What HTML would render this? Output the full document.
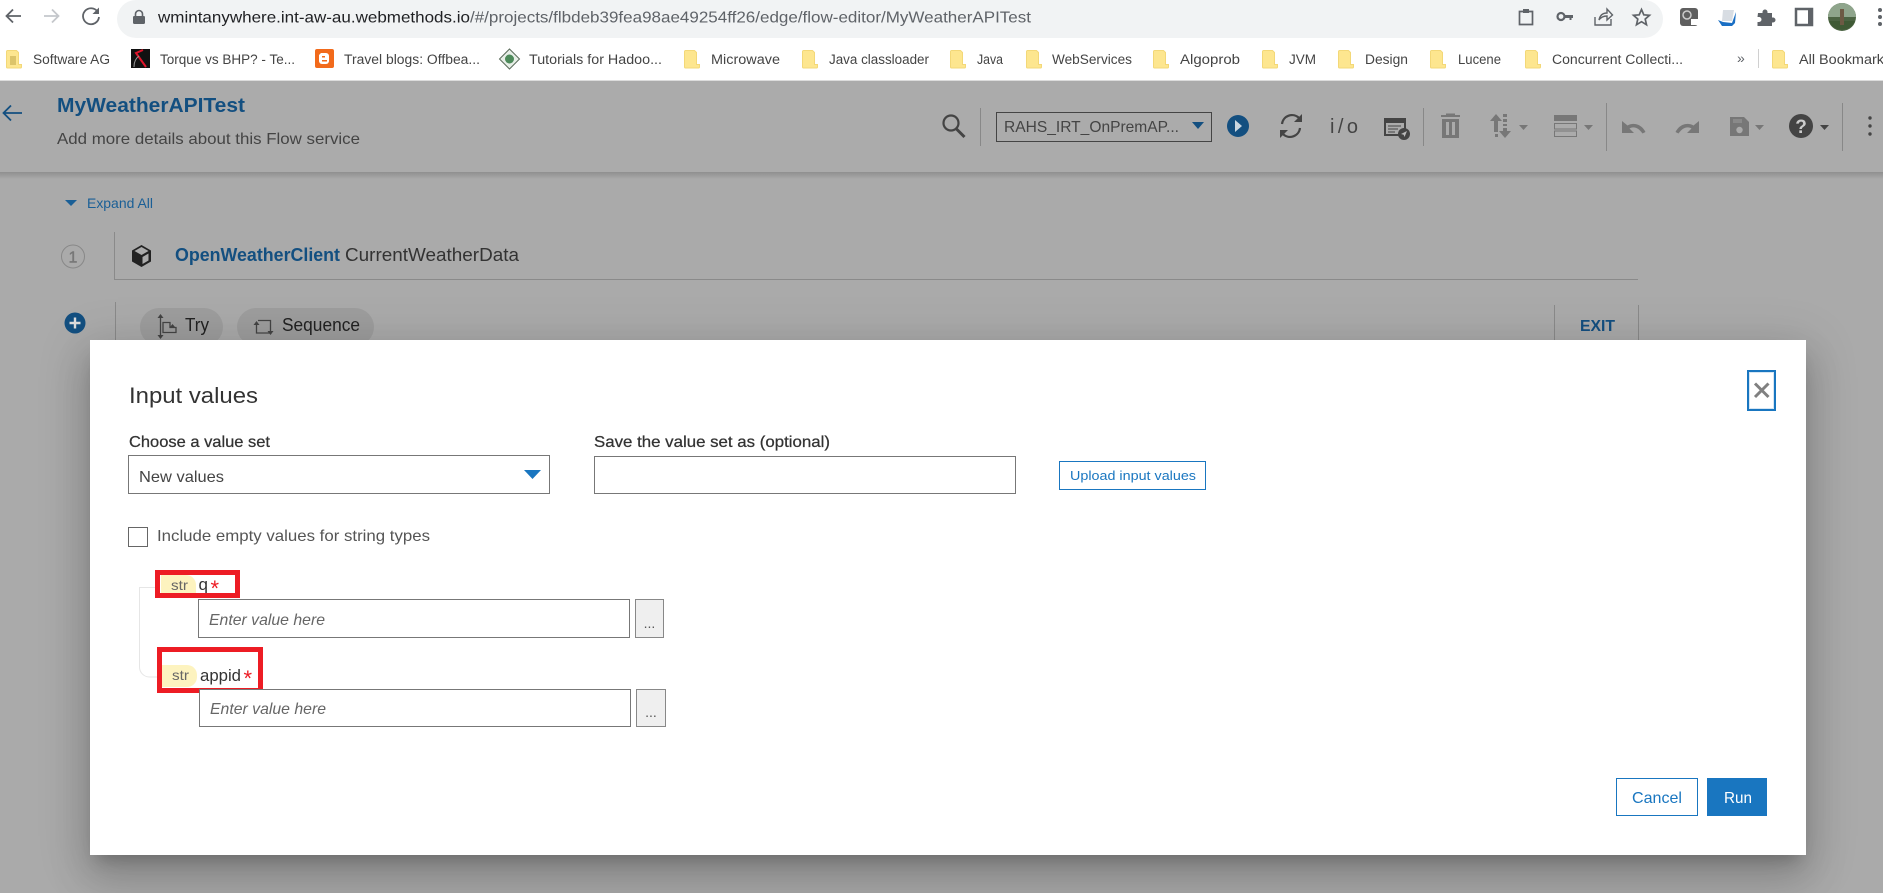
<!DOCTYPE html>
<html lang="en">
<head>
<meta charset="utf-8">
<title>MyWeatherAPITest</title>
<style>
html,body{margin:0;padding:0;width:1883px;height:893px;overflow:hidden;background:#aaa;}
svg{position:absolute;left:0;top:0;display:block;}
text{font-family:"Liberation Sans",Arial,sans-serif;}
#modal{position:absolute;left:90px;top:340px;width:1716px;height:515px;background:#fff;
box-shadow:0 11px 15px -7px rgba(0,0,0,.2),0 24px 38px 3px rgba(0,0,0,.14),0 9px 46px 8px rgba(0,0,0,.12);}
</style>
</head>
<body>
<svg width="1883" height="893" viewBox="0 0 1883 893" xmlns="http://www.w3.org/2000/svg">
<defs>
<linearGradient id="hs" x1="0" y1="0" x2="0" y2="1"><stop offset="0" stop-color="#8f8f8f"/><stop offset="1" stop-color="#aaa"/></linearGradient>
<g id="folder"><path d="M0.5 1.5a1 1 0 0 1 1-1h9l2 2v12h3v2.5a1 1 0 0 1-1 1H1.5a1 1 0 0 1-1-1z" fill="#fde68f" stroke="#f3d878" stroke-width="1"/></g>
</defs>
<rect width="1883" height="893" fill="#aaa"/>
<!-- chrome toolbar -->
<rect width="1883" height="81" fill="#fff"/>
<rect y="80" width="1883" height="1" fill="#dcdcdc"/>
<path d="M136 0H1644A19 19 0 0 1 1644 38H136A19 19 0 0 1 136 0z" fill="#f1f3f4"/>
<path d="M21 16H7M13 9.500L6.500 16l6.500 6.500" fill="none" stroke="#5f6368" stroke-width="1.800"/>
<path d="M44 16H58M52 9.500L58.500 16 52 22.500" fill="none" stroke="#c4c7cb" stroke-width="1.800"/>
<path d="M97.500 11.500A8 8 0 1 0 99 17" fill="none" stroke="#5f6368" stroke-width="1.800"/><path d="M99 7.500v6.500h-6.500z" fill="#5f6368"/>
<path d="M135.500 16.500v-2.500a3.500 3.500 0 0 1 7 0v2.500" fill="none" stroke="#5f6368" stroke-width="1.600"/><rect x="133" y="16" width="12" height="8" rx="1.200" fill="#5f6368"/>
<text x="158" y="22.500" font-size="16" textLength="873" lengthAdjust="spacingAndGlyphs"><tspan fill="#202124">wmintanywhere.int-aw-au.webmethods.io</tspan><tspan fill="#5f6368">/#/projects/flbdeb39fea98ae49254ff26/edge/flow-editor/MyWeatherAPITest</tspan></text>
<!-- omnibox right icons -->
<path d="M1519.500 11.500h13v13h-13z" fill="none" stroke="#5f6368" stroke-width="1.700"/><rect x="1523" y="9" width="6" height="4" fill="#5f6368"/>
<circle cx="1561" cy="16.500" r="3.500" fill="none" stroke="#5f6368" stroke-width="2.200"/><path d="M1565 15h8v3h-1.500v2h-2v-2h-4.500z" fill="#5f6368"/>
<path d="M1595 17v8h16v-6M1599 20c1-5 4-7 8-7V9l5.500 6-5.500 5v-4c-3 0-6 1-8 4z" fill="none" stroke="#5f6368" stroke-width="1.400"/>
<path d="M1641.500 9.500l2.300 5.300 5.700.5-4.300 3.800 1.300 5.600-5-3-5 3 1.300-5.600-4.300-3.800 5.700-.5z" fill="none" stroke="#5f6368" stroke-width="1.700"/>
<!-- extensions -->
<rect x="1680" y="8" width="18" height="18" rx="3" fill="#5f5f5f"/><circle cx="1687" cy="15" r="4" fill="none" stroke="#ccc" stroke-width="1.500"/><rect x="1691" y="19" width="7" height="6" fill="#fff"/>
<path d="M1723 10h11l-2 11h-10z" fill="#d8dde3"/><path d="M1718 20l5 2 9 1 4-11-1 11-3 3h-10z" fill="#1a6fc4"/>
<path d="M1758 13h4.500v-1a2.500 2.500 0 0 1 5 0v1h4.500v4.500h1a2.500 2.500 0 0 1 0 5h-1v3.500h-14.500v-4h1.500a2.500 2.500 0 0 0 0-5h-1.500z" fill="#5f6368"/>
<rect x="1796" y="9" width="16" height="16" fill="none" stroke="#5f6368" stroke-width="2.500"/><rect x="1808" y="9" width="5" height="16" fill="#5f6368"/>
<circle cx="1842" cy="17" r="14" fill="#4c6443"/><path d="M1828 17a14 14 0 0 1 28 0z" fill="#8fa58c"/><path d="M1829 21a14 14 0 0 0 26 0z" fill="#3f5a35"/><rect x="1840" y="9" width="4" height="16" fill="#6d5a44"/>
<circle cx="1880" cy="10" r="2" fill="#5f6368"/><circle cx="1880" cy="17" r="2" fill="#5f6368"/><circle cx="1880" cy="24" r="2" fill="#5f6368"/>
<!-- bookmarks -->
<g font-size="13.500" fill="#444">
<use href="#folder" x="6" y="50"/><path d="M10 56h6v9h-6z" fill="#dcc46a"/>
<text x="33" y="64" textLength="77" lengthAdjust="spacingAndGlyphs">Software AG</text>
<rect x="131" y="49" width="19" height="19" fill="#111"/><path d="M143 50l-7 3 10 14" fill="none" stroke="#e0132a" stroke-width="2"/><path d="M134 67c0-6 2-9 5-11" fill="none" stroke="#999"/>
<text x="160" y="64" textLength="135" lengthAdjust="spacingAndGlyphs">Torque vs BHP? - Te...</text>
<rect x="315" y="49" width="19" height="19" rx="2" fill="#f26a1b"/><path d="M321 53h5a3 3 0 0 1 3 3v5a3 3 0 0 1-3 3h-4a3 3 0 0 1-3-3v-6z" fill="#fff"/><rect x="322" y="56" width="3" height="1.500" fill="#f26a1b"/><rect x="322" y="60" width="5" height="1.500" fill="#f26a1b"/>
<text x="344" y="64" textLength="136" lengthAdjust="spacingAndGlyphs">Travel blogs: Offbea...</text>
<path d="M509.500 49l10 10-10 10-10-10z" fill="#e8efe8" stroke="#5a6b5a"/><circle cx="509.500" cy="59" r="4.500" fill="#4d8a5a"/>
<text x="529" y="64" textLength="133" lengthAdjust="spacingAndGlyphs">Tutorials for Hadoo...</text>
<use href="#folder" x="684" y="50"/><text x="711" y="64" textLength="69" lengthAdjust="spacingAndGlyphs">Microwave</text>
<use href="#folder" x="802" y="50"/><text x="829" y="64" textLength="100" lengthAdjust="spacingAndGlyphs">Java classloader</text>
<use href="#folder" x="950" y="50"/><text x="977" y="64" textLength="26" lengthAdjust="spacingAndGlyphs">Java</text>
<use href="#folder" x="1026" y="50"/><text x="1052" y="64" textLength="80" lengthAdjust="spacingAndGlyphs">WebServices</text>
<use href="#folder" x="1153" y="50"/><text x="1180" y="64" textLength="60" lengthAdjust="spacingAndGlyphs">Algoprob</text>
<use href="#folder" x="1262" y="50"/><text x="1289" y="64" textLength="27" lengthAdjust="spacingAndGlyphs">JVM</text>
<use href="#folder" x="1338" y="50"/><text x="1365" y="64" textLength="43" lengthAdjust="spacingAndGlyphs">Design</text>
<use href="#folder" x="1430" y="50"/><text x="1458" y="64" textLength="43" lengthAdjust="spacingAndGlyphs">Lucene</text>
<use href="#folder" x="1525" y="50"/><text x="1552" y="64" textLength="131" lengthAdjust="spacingAndGlyphs">Concurrent Collecti...</text>
<text x="1737" y="63" font-size="14" fill="#5f6368">»</text>
<rect x="1758" y="49" width="1" height="19" fill="#d0d0d0"/>
<use href="#folder" x="1772" y="50"/><text x="1799" y="64" textLength="85" lengthAdjust="spacingAndGlyphs">All Bookmark</text>
</g>
<!-- header -->
<rect y="81" width="1883" height="91" fill="#ababab"/>
<rect y="172" width="1883" height="7" fill="url(#hs)"/>
<path d="M22 113H4M11 105.500L3.500 113l7.500 7.500" fill="none" stroke="#134f80" stroke-width="1.800"/>
<text x="57" y="112" font-size="20.500" font-weight="700" fill="#134f80" textLength="188" lengthAdjust="spacingAndGlyphs">MyWeatherAPITest</text>
<text x="57" y="144" font-size="16" fill="#444" textLength="303" lengthAdjust="spacingAndGlyphs">Add more details about this Flow service</text>
<!-- toolbar -->
<circle cx="951" cy="123" r="7.500" fill="none" stroke="#444" stroke-width="2.200"/><path d="M956.500 129l8 8" stroke="#444" stroke-width="3" fill="none"/>
<rect x="980" y="108" width="1" height="38" fill="#888"/>
<rect x="996.500" y="112.500" width="215" height="29" fill="none" stroke="#444" stroke-width="1"/>
<text x="1004" y="132" font-size="16" fill="#444" textLength="175" lengthAdjust="spacingAndGlyphs">RAHS_IRT_OnPremAP...</text>
<path d="M1192 122h12l-6 7z" fill="#134f80"/>
<circle cx="1238" cy="126" r="11" fill="#134f80"/><path d="M1235 120l7 6-7 6z" fill="#c9d6e0"/>
<path d="M1282 124a10 10 0 0 1 17-6M1300 128a10 10 0 0 1-17 6" fill="none" stroke="#444" stroke-width="2.200"/><path d="M1302 114v8h-8zM1280 138v-8h8z" fill="#444"/>
<text x="1330" y="133" font-size="20" fill="#444" textLength="28" lengthAdjust="spacing">i/o</text>
<rect x="1385" y="119" width="20" height="16" fill="none" stroke="#444" stroke-width="2"/><rect x="1384" y="118" width="22" height="5" fill="#444"/><path d="M1388 126h13M1388 129h10M1388 132h7" stroke="#444" stroke-width="1.100"/><circle cx="1404" cy="134" r="6" fill="#444"/><path d="M1401 134l6-3-2.500 6-.8-2.200z" fill="#bbb"/>
<rect x="1423" y="108" width="1" height="38" fill="#888"/>
<g fill="#777">
<rect x="1441" y="115" width="19" height="2"/><rect x="1446" y="113.500" width="9" height="2"/>
<path d="M1442 119h17v19h-17zM1446 122v13h3v-13zM1452 122v13h3v-13z" fill-rule="evenodd"/>
<path d="M1496 114l-6 7h4v11h4v-11h4zM1505 138l6-7h-4v-3h-4v3h-4z" /><rect x="1503" y="114" width="4" height="3"/><rect x="1503" y="119" width="4" height="3"/><rect x="1503" y="124" width="4" height="2"/><rect x="1495" y="134" width="3" height="3"/>
<path d="M1519 125h9l-4.500 5z"/>
<rect x="1554" y="115" width="23" height="6"/>
<path d="M1584 125h9l-4.500 5z"/>
<path d="M1622 121v12h12l-4.500-4.500c4-2.500 9-1 13 5l3-1.500c-4-8-12-10-18-6.500z"/>
<path d="M1699 121v12h-12l4.500-4.500c-4-2.500-9-1-13 5l-3-1.500c4-8 12-10 18-6.500z"/>
<path d="M1730 117h14l5 5v14h-19z"/>
<path d="M1755 125h9l-4.500 5z"/>
</g>
<circle cx="1739.500" cy="130" r="3.200" fill="#ababab"/>
<rect x="1733" y="119" width="9" height="4" fill="#8a8a8a"/>
<rect x="1554.500" y="123.500" width="22" height="5.500" fill="none" stroke="#777"/><rect x="1554.500" y="131" width="22" height="5.500" fill="none" stroke="#777"/>
<rect x="1606" y="103" width="1" height="48" fill="#888"/>
<circle cx="1801" cy="126" r="12" fill="#444"/>
<text x="1801" y="133" font-size="19" font-weight="700" fill="#ccc" text-anchor="middle">?</text>
<path d="M1820 125h9l-4.500 5z" fill="#444"/>
<rect x="1842" y="103" width="1" height="48" fill="#888"/>
<circle cx="1870" cy="118" r="1.700" fill="#444"/><circle cx="1870" cy="126" r="1.700" fill="#444"/><circle cx="1870" cy="134" r="1.700" fill="#444"/>
<!-- content -->
<path d="M65 200h12l-6 6z" fill="#1a5f96"/>
<text x="87" y="208" font-size="14" fill="#1a5f96" textLength="66" lengthAdjust="spacingAndGlyphs">Expand All</text>
<circle cx="73" cy="256.500" r="11.500" fill="none" stroke="#888" stroke-width="1"/>
<text x="73" y="262.500" font-size="16" font-weight="400" stroke="#777" stroke-width=".4" fill="#777" text-anchor="middle">1</text>
<path d="M114.500 232V279.500H1638" fill="none" stroke="#8a8a8a" stroke-width="1"/>
<path d="M141.500 245l9.500 5.500v11l-9.500 5.500-9.500-5.500v-11z" fill="#222"/><path d="M134.500 251l7 4 7-4-7-4z" fill="#ababab"/><path d="M142.500 257v7l6-3.500v-7z" fill="#ababab"/>
<text x="175" y="261" font-size="18" font-weight="700" fill="#134f80" textLength="165" lengthAdjust="spacingAndGlyphs">OpenWeatherClient</text>
<text x="345" y="261" font-size="18" fill="#333" textLength="174" lengthAdjust="spacingAndGlyphs">CurrentWeatherData</text>
<circle cx="75" cy="323" r="10.500" fill="#134f80"/><path d="M75 317.500v11M69.500 323h11" stroke="#ddd" stroke-width="2.400"/>
<rect x="115" y="302" width="1" height="40" fill="#8a8a8a"/>
<rect x="140" y="308" width="83" height="38" rx="19" fill="#9d9d9d"/>
<rect x="237" y="308" width="137" height="38" rx="19" fill="#9d9d9d"/>
<path d="M160.500 316v22M163 322.500h7v5h6v5h-13z" fill="none" stroke="#444" stroke-width="1.300"/><path d="M160.500 314l3 4h-6zM160.500 339l3-4h-6zM170 327l2.500-3 2.500 3z" fill="#444"/>
<path d="M256.500 325v8h13M258 320.500h12.500v11" fill="none" stroke="#444" stroke-width="1.300"/><path d="M256.500 321l3 4h-6zM270.500 335l3-4h-6z" fill="#444"/>
<text x="185" y="331" font-size="18" fill="#222" textLength="24" lengthAdjust="spacingAndGlyphs">Try</text>
<text x="282" y="331" font-size="18" fill="#222" textLength="78" lengthAdjust="spacingAndGlyphs">Sequence</text>
<rect x="1554" y="305" width="1" height="37" fill="#8a8a8a"/><rect x="1638" y="305" width="1" height="37" fill="#8a8a8a"/>
<text x="1580" y="331" font-size="16" font-weight="700" fill="#134f80" textLength="35" lengthAdjust="spacingAndGlyphs">EXIT</text>
</svg>
<div id="modal"></div>
<svg width="1883" height="893" viewBox="0 0 1883 893" xmlns="http://www.w3.org/2000/svg">
<text x="129" y="403" font-size="22" fill="#333" textLength="129" lengthAdjust="spacingAndGlyphs">Input values</text>
<rect x="1748" y="371" width="27" height="39" fill="#fff" stroke="#1976c0" stroke-width="2"/>
<rect x="1749.500" y="372.500" width="24" height="36" fill="none" stroke="#d5e6f4" stroke-width="1"/>
<path d="M1755 383.500l13.500 13.500M1768.500 383.500L1755 397" stroke="#808080" stroke-width="3" fill="none"/>
<text x="129" y="447" font-size="16" font-weight="400" fill="#333" stroke="#333" stroke-width=".25" textLength="141" lengthAdjust="spacingAndGlyphs">Choose a value set</text>
<rect x="128.500" y="455.500" width="421" height="38" fill="#fff" stroke="#777"/>
<text x="139" y="482" font-size="16" fill="#444" textLength="85" lengthAdjust="spacingAndGlyphs">New values</text>
<path d="M524 470h17l-8.500 9z" fill="#1976c0"/>
<text x="594" y="447" font-size="16" fill="#333" stroke="#333" stroke-width=".25" textLength="236" lengthAdjust="spacingAndGlyphs">Save the value set as (optional)</text>
<rect x="594.500" y="456.500" width="421" height="37" fill="#fff" stroke="#777"/>
<rect x="1059.500" y="461.500" width="146" height="28" fill="#fff" stroke="#1976c0"/>
<text x="1070" y="480" font-size="13" fill="#1976c0" textLength="126" lengthAdjust="spacingAndGlyphs">Upload input values</text>
<rect x="128.500" y="527.500" width="19" height="19" fill="#fff" stroke="#666"/>
<text x="157" y="541" font-size="16" fill="#555" textLength="273" lengthAdjust="spacingAndGlyphs">Include empty values for string types</text>
<!-- tree lines -->
<path d="M157 587.500H139.500V667a10 10 0 0 0 10 10H160" fill="none" stroke="#e6e6e6" stroke-width="1"/>
<!-- param q -->
<path d="M161 575h25a10 10 0 0 1 10 10v8h-35z" fill="#fdf3bf"/>
<text x="171" y="590" font-size="14" fill="#666" textLength="17" lengthAdjust="spacingAndGlyphs">str</text>
<text x="198.500" y="590" font-size="17" fill="#333">q</text>
<text x="210.500" y="596" font-size="22" fill="#ed1c24">*</text>
<rect x="157.500" y="572.500" width="80" height="23" fill="none" stroke="#ed1c24" stroke-width="5"/>
<rect x="198.500" y="599.500" width="431" height="38" fill="#fff" stroke="#777"/>
<text x="209" y="625" font-size="16" font-style="italic" fill="#666" textLength="116" lengthAdjust="spacingAndGlyphs">Enter value here</text>
<rect x="635.500" y="599.500" width="28" height="38" fill="#efefef" stroke="#888"/>
<text x="649.500" y="628" font-size="14" fill="#555" text-anchor="middle">...</text>
<!-- param appid -->
<path d="M162 665h25a10 10 0 0 1 10 10v2a10 10 0 0 1-10 10h-25z" fill="#fdf3bf"/>
<text x="172" y="680" font-size="14" fill="#666" textLength="17" lengthAdjust="spacingAndGlyphs">str</text>
<text x="200" y="681" font-size="17" fill="#333" textLength="41" lengthAdjust="spacingAndGlyphs">appid</text>
<text x="243.500" y="686" font-size="22" fill="#ed1c24">*</text>
<rect x="159.500" y="649.500" width="101" height="41" fill="none" stroke="#ed1c24" stroke-width="5"/>
<rect x="199.500" y="689.500" width="431" height="37" fill="#fff" stroke="#777"/>
<text x="210" y="714" font-size="16" font-style="italic" fill="#666" textLength="116" lengthAdjust="spacingAndGlyphs">Enter value here</text>
<rect x="636.500" y="689.500" width="29" height="37" fill="#efefef" stroke="#888"/>
<text x="651" y="717" font-size="14" fill="#555" text-anchor="middle">...</text>
<!-- buttons -->
<rect x="1616.500" y="778.500" width="81" height="37" fill="#fff" stroke="#1976c0"/>
<text x="1632" y="803" font-size="16" fill="#1976c0" textLength="50" lengthAdjust="spacingAndGlyphs">Cancel</text>
<rect x="1707" y="778" width="60" height="38" fill="#1976c0"/>
<text x="1724" y="803" font-size="16" fill="#fff" textLength="28" lengthAdjust="spacingAndGlyphs">Run</text>
</svg>
</body>
</html>
